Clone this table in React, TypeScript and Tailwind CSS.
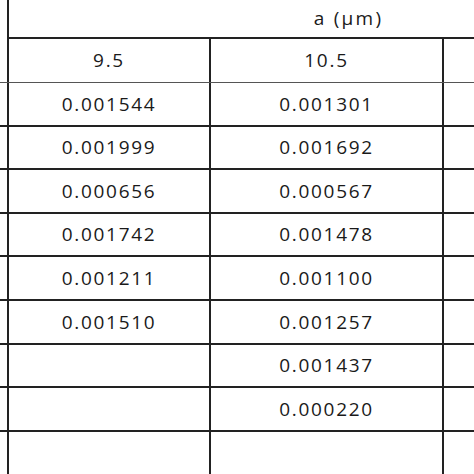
import React from "react";

const rows: { h: string; b: string; c1: string; c2: string }[] = [
  { h: "h-[44px]", b: "border-b-2", c1: "0.001544", c2: "0.001301" },
  { h: "h-[43px]", b: "border-b-2", c1: "0.001999", c2: "0.001692" },
  { h: "h-[44px]", b: "border-b-2", c1: "0.000656", c2: "0.000567" },
  { h: "h-[43px]", b: "border-b-2", c1: "0.001742", c2: "0.001478" },
  { h: "h-[44px]", b: "border-b-2", c1: "0.001211", c2: "0.001100" },
  { h: "h-[44px]", b: "border-b-2", c1: "0.001510", c2: "0.001257" },
  { h: "h-[43px]", b: "border-b-2", c1: "", c2: "0.001437" },
  { h: "h-[44px]", b: "border-b-2", c1: "", c2: "0.000220" },
  { h: "h-[60px]", b: "", c1: "", c2: "" },
];

export default function App() {
  return (
    <div
      className="w-[474px] h-[474px] overflow-hidden bg-white text-[#1a1a1a] text-[19px] tracking-[0.09em]"
      style={{ fontFamily: '"Open Sans", "Noto Sans", sans-serif' }}
    >
      {/* top header row */}
      <div className="flex h-[39px]">
        <div className="w-[7px] shrink-0" />
        <div className="flex-1 border-l-2 border-b-2 border-[#222] flex items-center justify-center pl-[214px] leading-none">
          <span className="tracking-[0.12em]">a (µm)</span>
        </div>
      </div>
      {/* second header row */}
      <div className="flex h-[44px] border-b border-[#555]">
        <div className="w-[7px] shrink-0" />
        <div className="w-[202px] shrink-0 border-l-2 border-[#222] flex items-center justify-center leading-none">
          9.5
        </div>
        <div className="w-[233px] shrink-0 border-l-2 border-[#222] flex items-center justify-center leading-none">
          10.5
        </div>
        <div className="flex-1 border-l-2 border-[#222]" />
      </div>
      {rows.map((r, i) => (
        <div key={i} className={`flex ${r.h} ${r.b} border-[#222]`}>
          <div className="w-[7px] shrink-0" />
          <div className="w-[202px] shrink-0 border-l-2 border-[#222] flex items-center justify-center leading-none">
            {r.c1}
          </div>
          <div className="w-[233px] shrink-0 border-l-2 border-[#222] flex items-center justify-center leading-none">
            {r.c2}
          </div>
          <div className="flex-1 border-l-2 border-[#222]" />
        </div>
      ))}
    </div>
  );
}
